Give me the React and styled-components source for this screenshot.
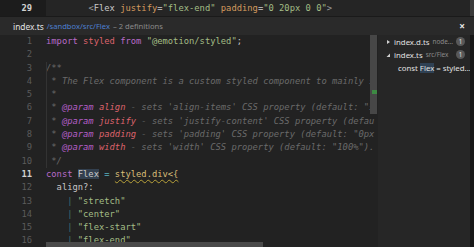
import React from 'react';
import styled, { createGlobalStyle } from 'styled-components';

const Global = createGlobalStyle`
  html, body { margin: 0; padding: 0; background: #1e1e1e; }
  body { width: 474px; height: 247px; overflow: hidden; }
`

const mono = `"DejaVu Sans Mono", "Liberation Mono", monospace`
const ui = `"Noto Sans", "Open Sans", sans-serif`

const Page = styled.div`
  width: 474px;
  height: 247px;
  display: flex;
  flex-direction: column;
  background: #1e1e1e;
  overflow: hidden;
`

const TopRow = styled.div`
  display: flex;
  height: 16px;
  background: #252525;
  border-bottom: 1px solid #1a1a1a;
`

const Gutter = styled.div`
  width: 46px;
  flex: none;
  display: flex;
  flex-direction: column;
  background: ${p => p.$bg || 'transparent'};
`

const LineNo = styled.div`
  height: ${p => p.$h || 13.3}px;
  line-height: ${p => p.$h || 13.3}px;
  padding-right: 14px;
  text-align: right;
  font-family: ${mono};
  font-size: 8.8px;
  color: ${p => p.$active ? '#d0d0d0' : '#5b5b5b'};
  font-weight: ${p => p.$active ? 700 : 400};
`

const Line = styled.div`
  height: ${p => p.$h || 13.3}px;
  line-height: ${p => p.$h || 13.3}px;
  font-family: ${mono};
  font-size: 8.8px;
  white-space: pre;
  color: #c8c8c8;
`

const T = styled.span`
  color: ${p => p.$c};
  font-style: ${p => p.$i ? 'italic' : 'normal'};
  background: ${p => p.$bg || 'none'};
  text-decoration: ${p => p.$squiggle ? 'underline wavy #b8a23a' : 'none'};
  text-decoration-thickness: 1px;
  text-underline-offset: 2px;
`

const OuterScroll = styled.div`
  width: 4px;
  flex: none;
  background: ${p => p.$light ? '#3a3a3a' : '#171717'};
`

const TopCode = styled.div`
  flex: 1;
  overflow: hidden;
`

const PeekHeader = styled.div`
  height: 18px;
  display: flex;
  align-items: center;
  padding: 0 9px 0 13px;
  background: #2a2a2a;
  font-family: ${ui};
  font-size: 8.4px;
  gap: 3px;
`

const FileName = styled.span`
  color: #e2e2e2;
`

const Path = styled.span`
  color: #4d7fd0;
  font-size: 7.6px;
`

const Meta = styled.span`
  color: #8a8a8a;
  font-size: 7.6px;
  flex: 1;
`

const Close = styled.span`
  color: #e8e8e8;
  font-size: 10px;
  font-weight: 700;
`

const PeekBody = styled.div`
  flex: 1;
  display: flex;
  min-height: 0;
`

const CodePane = styled.div`
  position: relative;
  width: 378px;
  flex: none;
  display: flex;
  background: #222222;
  overflow: hidden;
`

const Code = styled.div`
  flex: 1;
  position: relative;
  overflow: hidden;
`

const Guide = styled.div`
  position: absolute;
  left: 0;
  top: ${p => p.$top}px;
  height: ${p => p.$height}px;
  width: 1px;
  background: #333;
`

const VSlider = styled.div`
  position: absolute;
  right: 1px;
  top: 0;
  width: 7px;
  height: 79px;
  background: #474747;
`

const Marker = styled.div`
  position: absolute;
  right: 1px;
  top: 55px;
  width: 5px;
  height: 4px;
  background: #3d8a43;
`

const HSlider = styled.div`
  position: absolute;
  left: 0;
  bottom: 0;
  width: 217px;
  height: 5px;
  background: #4a4a4a;
`

const RefPanel = styled.div`
  width: 92px;
  flex: none;
  background: #262626;
  font-family: ${ui};
  font-size: 7.8px;
`

const TreeRow = styled.div`
  width: 92px;
  box-sizing: border-box;
  height: 13.3px;
  display: flex;
  align-items: center;
  gap: 2px;
  padding-left: ${p => p.$indent}px;
  padding-right: 5px;
  color: #e0e0e0;
  white-space: nowrap;
`

const Arrow = styled.svg`
  width: 6px;
  height: 6px;
  flex: none;
  margin-right: 1px;
`

const Name = styled.span`
  flex: none;
`

const Dim = styled.span`
  flex: 1 1 0;
  color: #8a8a8a;
  font-size: 6.4px;
  min-width: 0;
  overflow: hidden;
  padding-left: 1px;
`

const Badge = styled.span`
  flex: none;
  width: 9px;
  height: 9px;
  border-radius: 50%;
  background: #585858;
  color: #e0e0e0;
  font-size: 6.2px;
  line-height: 9px;
  text-align: center;
`

const c = {
  kw: '#b96bc8',
  red: '#dd636c',
  str: '#a3bd86',
  com: '#6a6a6a',
  param: '#b45ec6',
  attr: '#d39a5e',
  op: '#57b0bd',
  yel: '#d9bd78',
  txt: '#c8c8c8',
  pipe: '#3b7474',
}

const lines = [
  [['import', c.kw], [' '], ['styled', c.red], [' '], ['from', c.kw], [' '], ['"@emotion/styled"', c.str], [';', c.txt]],
  [],
  [['/**', c.com, true]],
  [[' * The Flex component is a custom styled component to mainly s', c.com, true]],
  [[' *', c.com, true]],
  [[' * ', c.com, true], ['@param', c.param, true], [' '], ['align', c.red, true], [" - sets 'align-items' CSS property (default: \"s", c.com, true]],
  [[' * ', c.com, true], ['@param', c.param, true], [' '], ['justify', c.red, true], [" - sets 'justify-content' CSS property (defau", c.com, true]],
  [[' * ', c.com, true], ['@param', c.param, true], [' '], ['padding', c.red, true], [" - sets 'padding' CSS property (default: \"0px", c.com, true]],
  [[' * ', c.com, true], ['@param', c.param, true], [' '], ['width', c.red, true], [" - sets 'width' CSS property (default: \"100%\").", c.com, true]],
  [[' */', c.com, true]],
  [['const', c.kw], [' '], ['Flex', c.txt, false, '#33404f'], [' '], ['=', c.op], [' '], ['styled.div<{', c.yel, false, null, true]],
  [['  align?:', c.txt]],
  [['    '], ['|', c.pipe], [' '], ['"stretch"', c.str]],
  [['    '], ['|', c.pipe], [' '], ['"center"', c.str]],
  [['    '], ['|', c.pipe], [' '], ['"flex-start"', c.str]],
  [['    '], ['|', c.pipe], [' '], ['"flex-end"', c.str]],
]

function CodeLine({ tokens }) {
  return (
    <Line>
      {tokens.length === 0 ? ' ' : tokens.map(([text, color, italic, bg, sq], i) => (
        <T key={i} $c={color || c.txt} $i={italic} $bg={bg} $squiggle={sq}>{text}</T>
      ))}
    </Line>
  );
}

function Chevron({ open }) {
  return (
    <Arrow viewBox="0 0 6 6">
      {open
        ? <path d="M5 1.5 L5 5 L1.5 5 Z" fill="#cfcfcf" />
        : <path d="M2 1 L5 3 L2 5 Z" fill="#cfcfcf" />}
    </Arrow>
  );
}

export default function App() {
  return (
    <Page>
      <Global />
      <TopRow>
        <Gutter $bg="#1c1c1c">
          <LineNo $h={16} $active>29</LineNo>
        </Gutter>
        <TopCode>
          <Line $h={16}>
            {'        '}
            <T $c="#9a9a9a">&lt;</T>
            <T $c={c.txt}>Flex</T>{' '}
            <T $c={c.attr}>justify</T>
            <T $c={c.txt}>=</T>
            <T $c={c.str}>"flex-end"</T>{' '}
            <T $c={c.attr}>padding</T>
            <T $c={c.txt}>=</T>
            <T $c={c.str}>"0 20px 0 0"</T>
            <T $c="#9a9a9a">&gt;</T>
          </Line>
        </TopCode>
        <OuterScroll $light />
      </TopRow>

      <PeekHeader>
        <FileName>index.ts</FileName>
        <Path>/sandbox/src/Flex</Path>
        <Meta>– 2 definitions</Meta>
        <Close>×</Close>
      </PeekHeader>

      <PeekBody>
        <CodePane>
          <Gutter>
            {lines.map((_, i) => (
              <LineNo key={i} $active={i === 10}>{i + 1}</LineNo>
            ))}
          </Gutter>
          <Code>
            <Guide $top={26.6} $height={106.4} />
            {lines.map((t, i) => <CodeLine key={i} tokens={t} />)}
            <HSlider />
          </Code>
          <VSlider />
          <Marker />
        </CodePane>
        <RefPanel>
          <TreeRow $indent={7}>
            <Chevron />
            <Name>index.d.ts</Name>
            <Dim>node...</Dim>
            <Badge>1</Badge>
          </TreeRow>
          <TreeRow $indent={7}>
            <Chevron open />
            <Name>index.ts</Name>
            <Dim>src/Flex</Dim>
            <Badge>1</Badge>
          </TreeRow>
          <TreeRow $indent={20}>
            <Name>const <T $c="#e0e0e0" $bg="#2f4154">Flex</T> = styled....</Name>
          </TreeRow>
        </RefPanel>
        <OuterScroll />
      </PeekBody>
    </Page>
  );
}
